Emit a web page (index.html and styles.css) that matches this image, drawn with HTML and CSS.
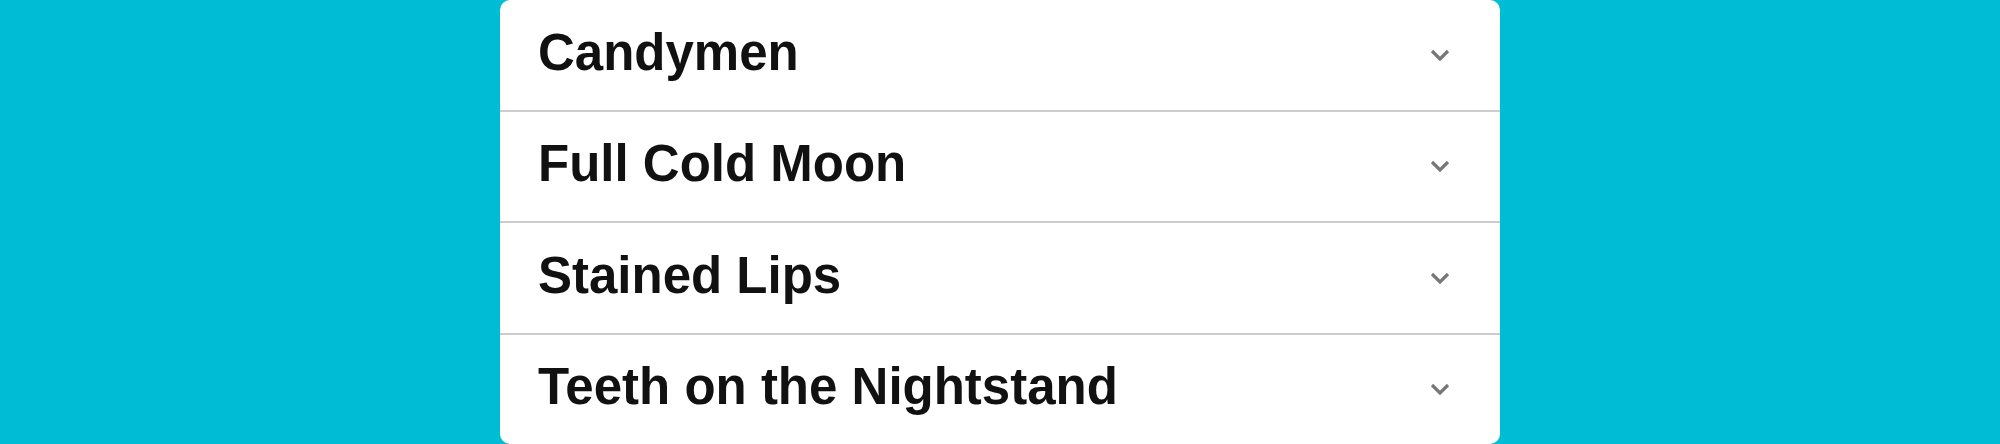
FILE: index.html
```html
<!DOCTYPE html>
<html lang="en">
<head>
  <meta charset="UTF-8">
  <title>Songs</title>
  <link rel="stylesheet" href="styles.css">
</head>
<body>
  <div class="accordion">
    <div class="item">
      <h2 class="title">Candymen</h2>
      <svg class="chevron" width="20" height="12" viewBox="0 0 20 12"><polyline points="2,2 10,10 18,2"/></svg>
    </div>
    <div class="item">
      <h2 class="title">Full Cold Moon</h2>
      <svg class="chevron" width="20" height="12" viewBox="0 0 20 12"><polyline points="2,2 10,10 18,2"/></svg>
    </div>
    <div class="item">
      <h2 class="title">Stained Lips</h2>
      <svg class="chevron" width="20" height="12" viewBox="0 0 20 12"><polyline points="2,2 10,10 18,2"/></svg>
    </div>
    <div class="item">
      <h2 class="title">Teeth on the Nightstand</h2>
      <svg class="chevron" width="20" height="12" viewBox="0 0 20 12"><polyline points="2,2 10,10 18,2"/></svg>
    </div>
  </div>
</body>
</html>
```

FILE: styles.css
```css
body {
  margin: 0;
  background: #00bcd4;
  font-family: "Liberation Sans", Arial, sans-serif;
}
.accordion {
  width: 1000px;
  height: 444px;
  margin: 0 auto;
  background: white;
  border-radius: 10px;
  display: flex;
  flex-direction: column;
  overflow: hidden;
}
.item {
  flex: 1;
  display: flex;
  align-items: center;
  justify-content: space-between;
  padding: 0 50px 0 38px;
  border-bottom: 2px solid #cccccc;
}
.item:last-child {
  border-bottom: none;
}
.title {
  margin: 0 0 5px;
  font-size: 51px;
  font-weight: bold;
  color: #111111;
}
.chevron {
  fill: none;
  stroke: #777777;
  stroke-width: 3.2;
}
```
